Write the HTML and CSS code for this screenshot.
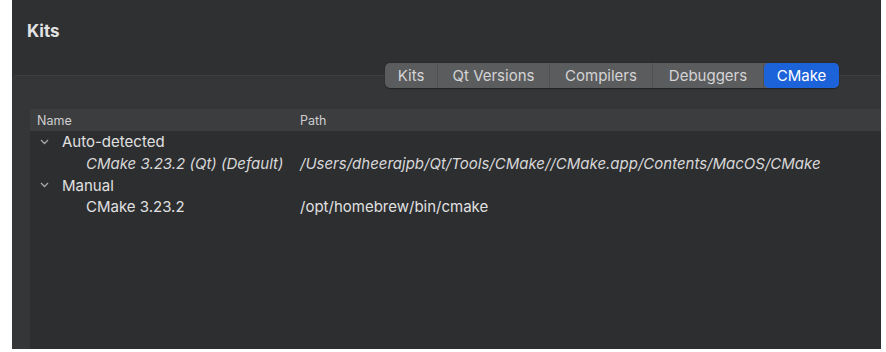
FILE: index.html
```html
<!DOCTYPE html>
<html>
<head>
<meta charset="utf-8">
<link rel="stylesheet" href="styles.css">
</head>
<body>
<div class="window">
  <div class="title">Kits</div>
  <div class="panel">
    <div class="tabs">
      <div class="tab t-kits">Kits</div>
      <div class="tab t-qt">Qt Versions</div>
      <div class="tab t-comp">Compilers</div>
      <div class="tab t-dbg">Debuggers</div>
      <div class="tab t-cmake active">CMake</div>
    </div>
    <div class="table">
      <div class="head">
        <div class="c-name">Name</div>
        <div class="c-path">Path</div>
      </div>
      <div class="row group">
        <div class="c-name"><span class="chev"><svg width="9" height="6" viewBox="0 0 9 6"><path d="M1 1l3.5 3.5L8 1" fill="none" stroke="#a8a8aa" stroke-width="1.3"/></svg></span>Auto-detected</div>
        <div class="c-path"></div>
      </div>
      <div class="row child italic">
        <div class="c-name">CMake 3.23.2 (Qt) (Default)</div>
        <div class="c-path">/Users/dheerajpb/Qt/Tools/CMake//CMake.app/Contents/MacOS/CMake</div>
      </div>
      <div class="row group">
        <div class="c-name"><span class="chev"><svg width="9" height="6" viewBox="0 0 9 6"><path d="M1 1l3.5 3.5L8 1" fill="none" stroke="#a8a8aa" stroke-width="1.3"/></svg></span>Manual</div>
        <div class="c-path"></div>
      </div>
      <div class="row child">
        <div class="c-name">CMake 3.23.2</div>
        <div class="c-path">/opt/homebrew/bin/cmake</div>
      </div>
    </div>
  </div>
</div>
</body>
</html>
```
FILE: styles.css
```css
html, body {
  margin: 0;
  padding: 0;
  background: #ffffff;
}
body {
  width: 886px;
  height: 352px;
  overflow: hidden;
  font-family: "Inter", "Liberation Sans", sans-serif;
}
.window {
  margin-left: 12px;
  width: 869px;
  height: 349px;
  background: #2f3032;
  display: flex;
  flex-direction: column;
}
.title {
  color: #e2e2e3;
  font-weight: 700;
  font-size: 17px;
  padding: 21px 0 0 15px;
  height: 53px;
  box-sizing: border-box;
}
.panel {
  position: relative;
  flex: 1;
  margin-top: 22px;
  background: #353637;
  border-top: 1px solid #3f4042;
  border-radius: 5px 0 0 0;
  display: flex;
  flex-direction: column;
  padding: 33px 0 0 18px;
}
.tabs {
  position: absolute;
  top: -13px;
  left: 373px;
  height: 25px;
  display: flex;
  background: #5b5c5e;
  border-radius: 5px;
  box-shadow: 0 0.5px 1.5px rgba(0,0,0,0.4);
}
.tab {
  color: #d4d4d5;
  font-size: 15px;
  line-height: 25px;
  text-align: center;
  border-right: 1px solid #4f5052;
  box-sizing: border-box;
}
.tab.active {
  border-right: none;
  background: #1c63d9;
  color: #ffffff;
  border-radius: 5px;
}
.t-kits { width: 53px; }
.t-qt { width: 112px; }
.t-comp { width: 103px; }
.t-dbg { width: 111px; }
.t-cmake { width: 75px; }
.table {
  flex: 1;
  background: #2d2e30;
  display: flex;
  flex-direction: column;
}
.head {
  display: flex;
  height: 22px;
  background: #3c3d3f;
  align-items: center;
  font-size: 12.5px;
  color: #cfcfd0;
}
.head .c-name { width: 270px; padding-left: 7px; box-sizing: border-box; }
.row {
  display: flex;
  height: 21.67px;
  align-items: center;
  font-size: 15px;
  color: #e0e0e1;
}
.row .c-name { width: 270px; box-sizing: border-box; white-space: nowrap; display: flex; align-items: center; }
.row .c-path { white-space: nowrap; }
.group .c-name { padding-left: 10px; }
.chev { display: inline-flex; width: 22px; }
.child .c-name { padding-left: 56px; }
.italic { font-style: italic; color: #d8d8d9; }
```
